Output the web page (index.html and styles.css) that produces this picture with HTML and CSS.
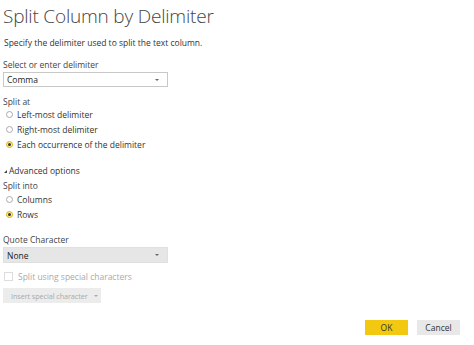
FILE: index.html
```html
<!DOCTYPE html>
<html lang="en">
<head>
  <meta charset="UTF-8">
  <title>Split Column by Delimiter</title>
  <link rel="stylesheet" href="styles.css">
</head>
<body>

<div class="dialog">
  <h1 class="title">Split Column by Delimiter</h1>
  <p class="intro">Specify the delimiter used to split the text column.</p>

  <div class="field">
    <div class="label">Select or enter delimiter</div>
    <div class="dropdown">
      <span>Comma</span>
      <span class="caret"></span>
    </div>
  </div>

  <div class="group">
    <div class="label">Split at</div>
    <div class="radio"><span class="dot"></span>Left-most delimiter</div>
    <div class="radio"><span class="dot"></span>Right-most delimiter</div>
    <div class="radio"><span class="dot checked"></span>Each occurrence of the delimiter</div>
  </div>

  <div class="advanced"><span class="tri"></span>Advanced options</div>

  <div class="group split-into">
    <div class="label">Split into</div>
    <div class="radio"><span class="dot"></span>Columns</div>
    <div class="radio"><span class="dot checked"></span>Rows</div>
  </div>

  <div class="field quote">
    <div class="label">Quote Character</div>
    <div class="dropdown filled">
      <span>None</span>
      <span class="caret"></span>
    </div>
  </div>

  <div class="check disabled"><span class="box"></span>Split using special characters</div>
  <button type="button" class="insert">Insert special character <span class="caret light"></span></button>

  <div class="actions">
    <button type="button" class="ok">OK</button>
    <button type="button" class="cancel">Cancel</button>
  </div>
</div>

</body>
</html>
```

FILE: styles.css
```css
body {
  margin: 0;
  padding: 0;
  background-color: #fff;
  font-family: "Open Sans", "Noto Sans", sans-serif;
  color: #333;
  font-size: 8.5px;
}

.dialog {
  width: 474px;
  height: 345px;
  padding: 3px 0 0 3px;
  box-sizing: border-box;
}

.title {
  margin: 0;
  font-weight: 300;
  font-size: 19px;
  line-height: 26px;
  color: #444;
  letter-spacing: -0.2px;
}

.intro {
  margin: 7px 0 0 1px;
  line-height: 14px;
  color: #333;
}

.label {
  line-height: 11px;
  color: #444;
}

.field {
  margin-top: 9px;
}

.dropdown {
  width: 165px;
  height: 15px;
  margin-top: 2px;
  border: 1px solid #c8c8c8;
  box-sizing: border-box;
  display: flex;
  align-items: center;
  justify-content: space-between;
  padding: 0 8px 0 3px;
  color: #222;
}

.dropdown.filled {
  background-color: #e6e6e6;
  border-color: #e0e0e0;
  height: 16px;
}

.caret {
  width: 0;
  height: 0;
  border-left: 2px solid transparent;
  border-right: 2px solid transparent;
  border-top: 2px solid #666;
}

.caret.light {
  border-top-color: #aaa;
  margin-left: 6px;
}

.group {
  margin-top: 9px;
}

.group.split-into {
  margin-top: 2px;
}

.radio {
  display: flex;
  align-items: center;
  height: 15px;
  padding-left: 3px;
  color: #333;
}

.split-into .radio {
  height: 14.5px;
  margin-top: 1px;
}

.dot {
  width: 7px;
  height: 7px;
  border: 1px solid #aaa;
  border-radius: 50%;
  box-sizing: border-box;
  margin-right: 4px;
  display: flex;
  align-items: center;
  justify-content: center;
}

.dot.checked {
  border-color: #e0b400;
  background-color: #fbe9a6;
}

.dot.checked::after {
  content: "";
  width: 3px;
  height: 3px;
  border-radius: 50%;
  background-color: #333;
}

.advanced {
  margin-top: 12px;
  line-height: 14px;
  display: flex;
  align-items: center;
  color: #333;
}

.tri {
  width: 0;
  height: 0;
  border-left: 3px solid transparent;
  border-bottom: 3px solid #444;
  margin: 0 2px 0 1px;
}

.field.quote {
  margin-top: 12px;
}

.check {
  display: flex;
  align-items: center;
  margin-top: 6px;
  height: 15px;
  color: #aaa;
}

.box {
  width: 9px;
  height: 9px;
  border: 1px solid #ddd;
  box-sizing: border-box;
  margin: 0 5px 0 1px;
}

.insert {
  display: flex;
  align-items: center;
  margin-top: 4px;
  width: 98px;
  height: 15px;
  padding: 0 0 0 8px;
  border: none;
  background-color: #ececec;
  color: #aaa;
  font-family: inherit;
  font-size: 7.3px;
  letter-spacing: -0.1px;
  white-space: nowrap;
}

.actions {
  display: flex;
  justify-content: flex-end;
  gap: 9px;
  margin-top: 17px;
  padding-right: 14px;
}

.actions button {
  width: 43px;
  height: 15px;
  border: none;
  font-family: inherit;
  font-size: 8.5px;
  color: #333;
}

.ok {
  background-color: #f2c811;
}

.cancel {
  background-color: #e8e8e8;
}
```
